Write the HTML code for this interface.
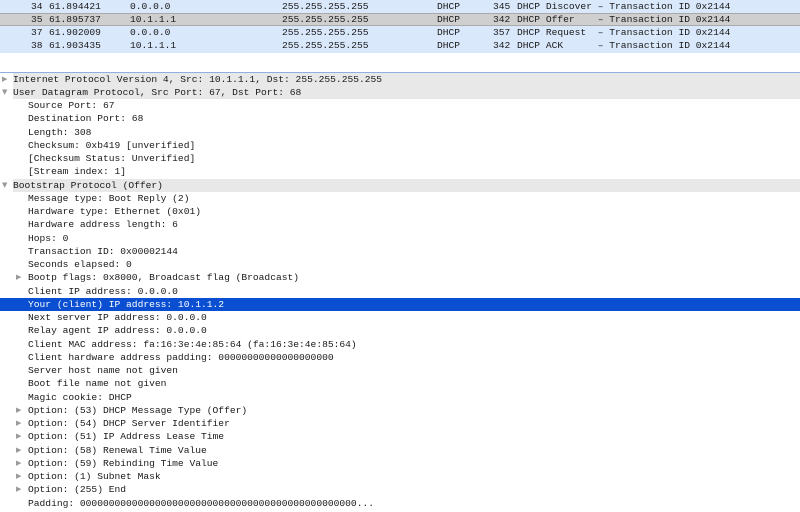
<!DOCTYPE html>
<html><head><style>
body{margin:0;width:800px;height:512px;overflow:hidden;background:#fff;font-family:"Liberation Mono","DejaVu Sans Mono",monospace;font-size:9.62px;color:#1a1a1a;position:relative}
.r{position:absolute;left:0;width:800px;height:13.25px;line-height:13.25px;white-space:pre}
.p{background:#dae8fb}
.sel{background:#cfcfcf;border-top:1px solid #aaa;border-bottom:1px solid #aaa;box-sizing:border-box;line-height:11.5px}
.c{position:absolute;top:0}
.g{position:absolute;left:13px;right:0;top:0;bottom:0;background:#e8e8e8}
.a{position:absolute;top:0;color:#999;font-size:7px;font-family:"DejaVu Sans",sans-serif}
.t{position:absolute;top:0}
.hl{background:#0a4fd1;color:#fff}
</style></head><body>
<div class="r p" style="top:-0.5px"><span class="c" style="left:31px">34</span><span class="c" style="left:49px">61.894421</span><span class="c" style="left:130px">0.0.0.0</span><span class="c" style="left:282px">255.255.255.255</span><span class="c" style="left:437px">DHCP</span><span class="c" style="left:493px">345</span><span class="c" style="left:517px">DHCP Discover – Transaction ID 0x2144</span></div>
<div class="r sel" style="top:12.75px"><span class="c" style="left:31px">35</span><span class="c" style="left:49px">61.895737</span><span class="c" style="left:130px">10.1.1.1</span><span class="c" style="left:282px">255.255.255.255</span><span class="c" style="left:437px">DHCP</span><span class="c" style="left:493px">342</span><span class="c" style="left:517px">DHCP Offer    – Transaction ID 0x2144</span></div>
<div class="r p" style="top:26px"><span class="c" style="left:31px">37</span><span class="c" style="left:49px">61.902009</span><span class="c" style="left:130px">0.0.0.0</span><span class="c" style="left:282px">255.255.255.255</span><span class="c" style="left:437px">DHCP</span><span class="c" style="left:493px">357</span><span class="c" style="left:517px">DHCP Request  – Transaction ID 0x2144</span></div>
<div class="r p" style="top:39.25px"><span class="c" style="left:31px">38</span><span class="c" style="left:49px">61.903435</span><span class="c" style="left:130px">10.1.1.1</span><span class="c" style="left:282px">255.255.255.255</span><span class="c" style="left:437px">DHCP</span><span class="c" style="left:493px">342</span><span class="c" style="left:517px">DHCP ACK      – Transaction ID 0x2144</span></div>
<div style="position:absolute;left:0;top:71.5px;width:800px;height:1px;background:#8fb0e0"></div>
<div id="d"></div>
<script>
var rows=[
[1,'r','Internet Protocol Version 4, Src: 10.1.1.1, Dst: 255.255.255.255',1],
[1,'d','User Datagram Protocol, Src Port: 67, Dst Port: 68',1],
[2,'','Source Port: 67'],[2,'','Destination Port: 68'],[2,'','Length: 308'],[2,'','Checksum: 0xb419 [unverified]'],[2,'','[Checksum Status: Unverified]'],[2,'','[Stream index: 1]'],
[1,'d','Bootstrap Protocol (Offer)',1],
[2,'','Message type: Boot Reply (2)'],[2,'','Hardware type: Ethernet (0x01)'],[2,'','Hardware address length: 6'],[2,'','Hops: 0'],[2,'','Transaction ID: 0x00002144'],[2,'','Seconds elapsed: 0'],[2,'r','Bootp flags: 0x8000, Broadcast flag (Broadcast)'],[2,'','Client IP address: 0.0.0.0'],[2,'','Your (client) IP address: 10.1.1.2',0,1],[2,'','Next server IP address: 0.0.0.0'],[2,'','Relay agent IP address: 0.0.0.0'],[2,'','Client MAC address: fa:16:3e:4e:85:64 (fa:16:3e:4e:85:64)'],[2,'','Client hardware address padding: 00000000000000000000'],[2,'','Server host name not given'],[2,'','Boot file name not given'],[2,'','Magic cookie: DHCP'],
[2,'r','Option: (53) DHCP Message Type (Offer)'],[2,'r','Option: (54) DHCP Server Identifier'],[2,'r','Option: (51) IP Address Lease Time'],[2,'r','Option: (58) Renewal Time Value'],[2,'r','Option: (59) Rebinding Time Value'],[2,'r','Option: (1) Subnet Mask'],[2,'r','Option: (255) End'],[2,'','Padding: 000000000000000000000000000000000000000000000000...']];
var h='';
rows.forEach(function(r,i){var top=72.5+13.25*i;var tx=r[0]==1?13:28;var ax=r[0]==1?2:16;
h+='<div class="r'+(r[4]?' hl':'')+'" style="top:'+top+'px">'+(r[3]?'<div class="g"></div>':'')+(r[1]?'<span class="a" style="left:'+ax+'px">'+(r[1]=='r'?'▶':'▼')+'</span>':'')+'<span class="t" style="left:'+tx+'px">'+r[2]+'</span></div>';});
document.getElementById('d').innerHTML=h;
</script>
</body></html>
